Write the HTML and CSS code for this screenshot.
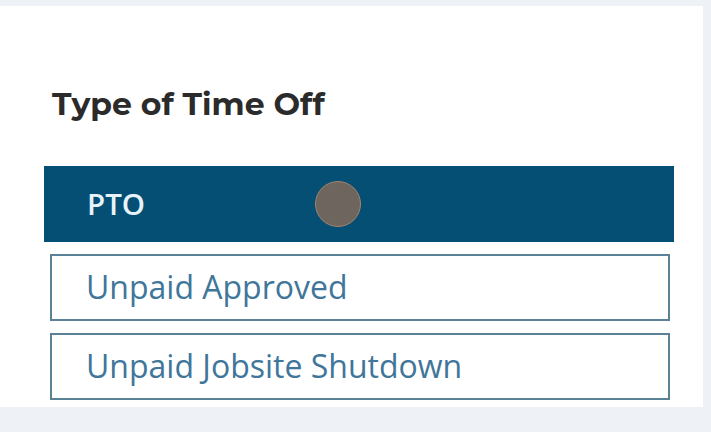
FILE: index.html
```html
<!DOCTYPE html>
<html>
<head>
<meta charset="utf-8">
<link rel="stylesheet" href="styles.css">
</head>
<body>
<div class="panel">
  <h2 class="title">Type of Time Off</h2>
  <div class="options">
    <div class="option selected">
      <span class="label">PTO</span>
      <span class="cursor"></span>
    </div>
    <div class="option"><span class="label">Unpaid Approved</span></div>
    <div class="option"><span class="label">Unpaid Jobsite Shutdown</span></div>
  </div>
</div>
</body>
</html>
```
FILE: styles.css
```css
html, body {
  margin: 0;
  padding: 0;
  background: #eef2f6;
  width: 711px;
  height: 432px;
  overflow: hidden;
}
.panel {
  margin-top: 6px;
  width: 703px;
  height: 401px;
  background: #ffffff;
  box-sizing: border-box;
  padding: 78px 0 0 44px;
  display: flex;
  flex-direction: column;
}
.title {
  margin: 0 0 0 8px;
  font-family: "Montserrat", "Open Sans", sans-serif;
  font-weight: 700;
  font-size: 31.5px;
  line-height: 40px;
  color: #2b2b2b;
}
.options {
  margin-top: 42px;
  display: flex;
  flex-direction: column;
  gap: 12px;
}
.option {
  position: relative;
  box-sizing: border-box;
  width: 620px;
  height: 67px;
  margin-left: 6px;
  border: 2px solid #5a8196;
  display: flex;
  align-items: center;
  padding-left: 34px;
  font-family: "Open Sans", sans-serif;
  font-size: 32px;
  color: #40769a;
}
.option.selected {
  width: 630px;
  height: 76px;
  margin-left: 0;
  background: #054e74;
  border: none;
  padding-left: 43px;
  color: #e6f3fa;
  font-weight: 600;
  font-size: 29.5px;
}
.label {
  line-height: 1;
  margin-top: -1px;
}
.cursor {
  position: absolute;
  left: 271px;
  top: 15px;
  width: 46px;
  height: 46px;
  border-radius: 50%;
  background: #6e655f;
  border: 1.5px solid #a2846c;
  box-sizing: border-box;
}
```
